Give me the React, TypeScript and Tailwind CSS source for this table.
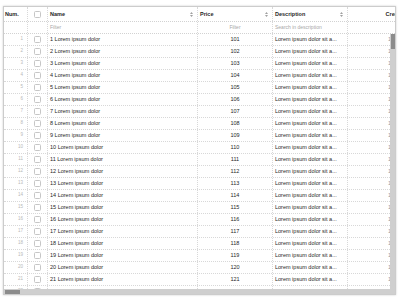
import React from "react";

const SortIcon = () => (
  <svg width="3" height="5" viewBox="0 0 3 5" className="shrink-0">
    <path d="M1.5 0 L3 2 L0 2 Z" fill="#a0a0a0" />
    <path d="M1.5 5 L3 3 L0 3 Z" fill="#a0a0a0" />
  </svg>
);

const Box = () => (
  <div className="w-[7px] h-[7px] rounded-[1.5px] border border-[#c6c6c6] bg-white" />
);

const cell = "border-r border-dotted border-[#d8d8d8] h-full flex items-center overflow-hidden whitespace-nowrap";

export default function App() {
  const rows = Array.from({ length: 22 }, (_, i) => i + 1);
  return (
    <div className="w-[400px] h-[300px] bg-white pl-[3px] pt-[6px]" style={{ fontFamily: '"Liberation Sans", Arial, sans-serif' }}>
      <div className="w-[393px] h-[289px] border border-[#cccccc] shadow-[0_0_2px_rgba(0,0,0,0.2)] flex flex-col overflow-hidden bg-white text-[5.5px] text-[#1f1f1f]">
        {/* header */}
        <div className="h-[15px] flex shrink-0 border-b border-dotted border-[#d2d2d2] font-bold">
          <div className={`${cell} w-[24px] pl-[1px]`}>Num.</div>
          <div className={`${cell} w-[20px] justify-center`}><Box /></div>
          <div className={`${cell} w-[150px] pl-[2px] pr-[4px] justify-between`}><span>Name</span><SortIcon /></div>
          <div className={`${cell} w-[75px] pl-[2px] pr-[4px] justify-between`}><span>Price</span><SortIcon /></div>
          <div className={`${cell} w-[75px] pl-[2px] pr-[4px] justify-between`}><span>Description</span><SortIcon /></div>
          <div className="flex-1 h-full flex items-center justify-end overflow-hidden whitespace-nowrap"><span className="mr-[-11px]">Created</span></div>
        </div>
        {/* filter */}
        <div className="h-[12px] flex shrink-0 border-b border-dotted border-[#d2d2d2] text-[#a8a8a8] text-[5px]">
          <div className={`${cell} w-[24px]`} />
          <div className={`${cell} w-[20px]`} />
          <div className={`${cell} w-[150px] pl-[2px]`}>Filter</div>
          <div className={`${cell} w-[75px] justify-center`}>Filter</div>
          <div className={`${cell} w-[75px] pl-[2px]`}>Search in description</div>
          <div className="flex-1" />
        </div>
        {/* body */}
        <div className="flex-1 flex min-h-0">
          <div className="flex-1 flex flex-col overflow-hidden">
            {rows.map((n) => (
              <div key={n} className="h-[12px] shrink-0 flex border-b border-dotted border-[#d8d8d8]">
                <div className={`${cell} w-[24px] justify-end pr-[4px] text-[#b8b8b8] text-[4.5px]`}>{n}</div>
                <div className={`${cell} w-[20px] justify-center`}><Box /></div>
                <div className={`${cell} w-[150px] pl-[2px]`}>{n} Lorem ipsum dolor</div>
                <div className={`${cell} w-[75px] justify-center`}>{100 + n}</div>
                <div className={`${cell} w-[75px] pl-[2px]`}>Lorem ipsum dolor sit a...</div>
                <div className="flex-1 h-full flex items-center justify-end overflow-hidden text-[#999]"><span className="mr-[-1px]">1</span></div>
              </div>
            ))}
          </div>
          <div className="w-[5px] bg-[#cfcfcf] flex flex-col">
            <div className="h-[15px] mx-[0.5px] bg-[#8c8c8c]" />
          </div>
        </div>
        <div className="h-[5px] shrink-0 bg-[#cfcfcf] flex">
          <div className="w-[15px] ml-[1px] my-[0.5px] bg-[#8c8c8c]" />
        </div>
      </div>
    </div>
  );
}
